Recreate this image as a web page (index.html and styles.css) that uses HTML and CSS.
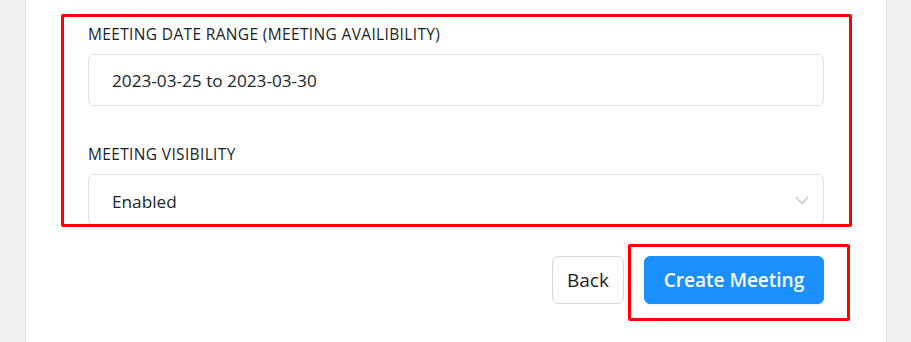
FILE: index.html
```html
<!DOCTYPE html>
<html>
<head>
<meta charset="utf-8">
<link rel="stylesheet" href="styles.css">
</head>
<body>
<div class="card">
  <div class="form">
    <div class="group">
      <label class="label">Meeting Date Range (Meeting Availibility)</label>
      <div class="input">2023-03-25 to 2023-03-30</div>
    </div>
    <div class="group group-second">
      <label class="label">Meeting Visibility</label>
      <div class="input select">
        <span>Enabled</span>
        <svg class="chevron" width="14" height="9" viewBox="0 0 14 9"><path d="M1 1 L7 7.5 L13 1" fill="none" stroke="#c4c4c4" stroke-width="1.3"/></svg>
      </div>
    </div>
    <div class="actions">
      <button class="btn btn-back">Back</button>
      <button class="btn btn-primary">Create Meeting</button>
    </div>
  </div>
  <div class="mark mark-form"></div>
  <div class="mark mark-btn"></div>
</div>
</body>
</html>
```
FILE: styles.css
```css
html, body {
  margin: 0;
  padding: 0;
  height: 100%;
}
body {
  background: #f0f0f0;
  font-family: "Open Sans", "Noto Sans", sans-serif;
  color: #212529;
  overflow: hidden;
}
.card {
  position: relative;
  margin-left: 25px;
  width: 862px;
  height: 342px;
  background: #ffffff;
  border-left: 1px solid #e2e2e2;
  border-right: 1px solid #e2e2e2;
  box-sizing: border-box;
}
.form {
  padding: 24px 62px 0 62px;
}
.group {
  display: flex;
  flex-direction: column;
}
.group-second {
  margin-top: 38px;
}
.label {
  font-size: 15.5px;
  line-height: 20px;
  text-transform: uppercase;
  color: #1a1e24;
  margin-bottom: 10px;
  letter-spacing: 0.35px;
  font-weight: 500;
}
.input {
  height: 52px;
  box-sizing: border-box;
  border: 1px solid #e1e1e1;
  border-radius: 6px;
  padding: 0 23px;
  display: flex;
  align-items: center;
  font-size: 17.2px;
  color: #212529;
}
.select {
  justify-content: space-between;
  padding-right: 14px;
  padding-top: 2px;
}
.chevron {
  display: block;
  margin-top: -2px;
}
.actions {
  display: flex;
  justify-content: flex-end;
  gap: 20px;
  margin-top: 30px;
}
.btn {
  font-family: "Open Sans", "Noto Sans", sans-serif;
  font-size: 19px;
  height: 48px;
  border-radius: 6px;
  cursor: pointer;
}
.btn-back {
  width: 72px;
  background: #ffffff;
  border: 1px solid #d9d9d9;
  color: #1a1e24;
  font-weight: 500;
  padding: 0;
}
.btn-primary {
  width: 180px;
  background: #1a90ff;
  border: 1px solid #1a90ff;
  color: #ffffff;
  font-weight: 600;
  padding: 0;
  box-shadow: 0 2px 2px rgba(0,0,0,0.05);
}
.mark {
  position: absolute;
  border: 3px solid #ff0000;
  border-radius: 2px;
  box-sizing: border-box;
  pointer-events: none;
}
.mark-form {
  left: 35px;
  top: 14px;
  width: 791px;
  height: 213px;
}
.mark-btn {
  left: 602px;
  top: 244px;
  width: 222px;
  height: 77px;
}
```
